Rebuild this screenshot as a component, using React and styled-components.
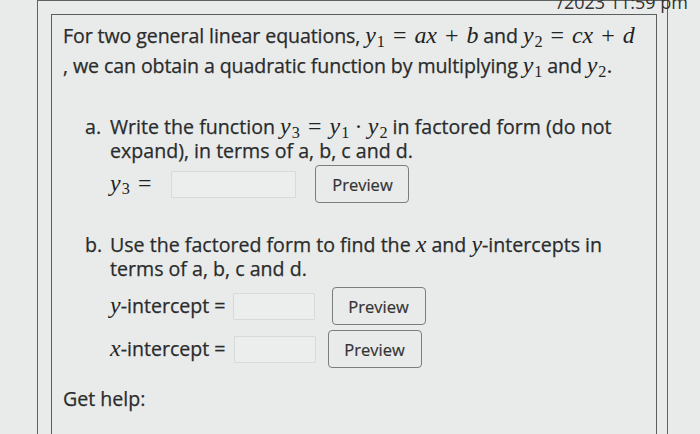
import React from "react";
import styled, { createGlobalStyle } from "styled-components";

const Global = createGlobalStyle`
  html, body {
    margin: 0;
    padding: 0;
    background: #e8ebe9;
  }
  body {
    font-family: "Open Sans", "Noto Sans", sans-serif;
    color: #2a2b2c;
    overflow: hidden;
  }
`;

const Page = styled.div`
  height: 434px;
  padding-top: 8px;
  box-sizing: border-box;
  overflow: hidden;
`;

const Stamp = styled.div`
  display: flex;
  justify-content: flex-end;
  margin: -15px 12px 0 0;
  height: 7px;
  font-size: 18px;
  line-height: 18px;
  color: #333;
`;

const Outer = styled.div`
  margin-left: 37px;
  width: 631px;
  height: 440px;
  box-sizing: border-box;
  border: 1px solid #5e6261;
  border-bottom: 0;
  padding: 13px 10px 0 13px;
`;

const Inner = styled.div`
  height: 100%;
  box-sizing: border-box;
  border: 1px solid #5a5e5d;
  border-bottom: 0;
  padding: 6px 8px 0 11px;
  font-size: 19.6px;
  -webkit-text-stroke: 0.25px #2a2b2c;
`;

const Intro = styled.p`
  margin: 0;
  line-height: 30px;
  letter-spacing: -0.1px;
`;

const Parts = styled.ol`
  list-style: none;
  margin: 34px 0 0;
  padding: 0 0 0 22px;
`;

const Part = styled.li`
  display: flex;
  margin-top: ${(p) => p.$gap || 0}px;
`;

const Label = styled.span`
  flex: 0 0 25px;
  line-height: 24px;
`;

const Body = styled.div`
  flex: 1;
  line-height: 24px;
`;

const Row = styled.div`
  display: flex;
  align-items: center;
  margin-top: ${(p) => p.$gap || 0}px;
`;

const Field = styled.span`
  display: inline-block;
  width: ${(p) => p.$w}px;
  height: 25px;
  margin-left: ${(p) => p.$ml}px;
  border: 1px solid #d6dbda;
  border-radius: 1px;
  background: rgba(255, 255, 255, 0.15);
`;

const Button = styled.button`
  width: 94px;
  height: 38px;
  margin-left: ${(p) => p.$ml}px;
  border: 1px solid #7a7e7d;
  border-radius: 4px;
  background: transparent;
  font-family: "Open Sans", "Noto Sans", sans-serif;
  font-size: 16.5px;
  color: #333;
  -webkit-text-stroke: 0.2px #333;
  padding: 0;
`;

const Help = styled.div`
  margin-top: 19px;
  line-height: 24px;
`;

const MathText = styled.span`
  font-family: "Liberation Serif", "DejaVu Serif", serif;
  font-size: 1.22em;
  line-height: 0;
  color: #222;
  white-space: nowrap;
  -webkit-text-stroke: 0;
`;

const V = styled.i`
  font-style: italic;
`;

const Sub = styled.span`
  font-style: normal;
  font-size: 0.68em;
  position: relative;
  top: 0.22em;
  margin-left: 1px;
`;

const Op = styled.span`
  margin: 0 ${(p) => p.$s || 0.34}em;
`;

const Y = ({ n }) => (
  <>
    <V>y</V>
    <Sub>{n}</Sub>
  </>
);

export default function App() {
  return (
    <Page>
      <Global />
      <Stamp>/2023 11:59 pm</Stamp>
      <Outer>
        <Inner>
          <Intro>
            For two general linear equations,{" "}
            <MathText>
              <Y n="1" />
              <Op>=</Op>
              <V>ax</V>
              <Op>+</Op>
              <V>b</V>
            </MathText>{" "}
            and{" "}
            <MathText>
              <Y n="2" />
              <Op>=</Op>
              <V>cx</V>
              <Op>+</Op>
              <V>d</V>
            </MathText>
            <br />, we can obtain a quadratic function by multiplying{" "}
            <MathText>
              <Y n="1" />
            </MathText>{" "}
            and{" "}
            <MathText>
              <Y n="2" />.
            </MathText>
          </Intro>
          <Parts>
            <Part>
              <Label>a.</Label>
              <Body>
                Write the function{" "}
                <MathText>
                  <Y n="3" />
                  <Op>=</Op>
                  <Y n="1" />
                  <Op $s={0.22}>·</Op>
                  <Y n="2" />
                </MathText>{" "}
                in factored form (do not
                <br />
                expand), in terms of a, b, c and d.
                <Row $gap={2}>
                  <MathText>
                    <Y n="3" />
                    <Op>=</Op>
                  </MathText>
                  <Field $w={123} $ml={12} />
                  <Button $ml={19}>Preview</Button>
                </Row>
              </Body>
            </Part>
            <Part $gap={30}>
              <Label>b.</Label>
              <Body>
                Use the factored form to find the <MathText><V>x</V></MathText> and{" "}
                <MathText><V>y</V></MathText>-intercepts in
                <br />
                terms of a, b, c and d.
                <Row $gap={6}>
                  <span>
                    <MathText><V>y</V></MathText>-intercept =
                  </span>
                  <Field $w={80} $ml={7} />
                  <Button $ml={17}>Preview</Button>
                </Row>
                <Row $gap={5}>
                  <span>
                    <MathText><V>x</V></MathText>-intercept =
                  </span>
                  <Field $w={80} $ml={8} />
                  <Button $ml={12}>Preview</Button>
                </Row>
              </Body>
            </Part>
          </Parts>
          <Help>Get help:</Help>
        </Inner>
      </Outer>
    </Page>
  );
}
